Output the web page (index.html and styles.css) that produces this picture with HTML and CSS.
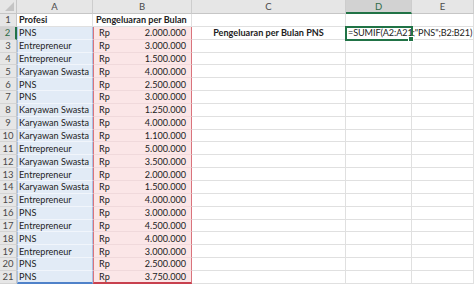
FILE: index.html
```html
<!DOCTYPE html>
<html>
<head>
<meta charset="utf-8">
<link rel="stylesheet" href="styles.css">
</head>
<body>
<div class="sheet">
  <div class="corner"><svg width="9" height="9" viewBox="0 0 9 9"><polygon points="9,0 9,9 0,9" fill="#c4c4c4"/></svg></div>
  <div class="ch">A</div><div class="ch">B</div><div class="ch">C</div><div class="ch sel">D</div><div class="ch">E</div>

  <div class="rh">1</div><div class="c b">Profesi</div><div class="c b hb">Pengeluaran per Bulan</div><div class="c"></div><div class="c"></div><div class="c"></div>

  <div class="rh sel">2</div><div class="c ra">PNS</div><div class="c rb"><span>Rp</span><span>2.000.000</span></div><div class="c b ctr">Pengeluaran per Bulan PNS</div><div class="c active">=SUMIF(A2:A21;"PNS";B2:B21)</div><div class="c e2"></div>
  <div class="rh">3</div><div class="c ra">Entrepreneur</div><div class="c rb"><span>Rp</span><span>3.000.000</span></div><div class="c"></div><div class="c"></div><div class="c"></div>
  <div class="rh">4</div><div class="c ra">Entrepreneur</div><div class="c rb"><span>Rp</span><span>1.500.000</span></div><div class="c"></div><div class="c"></div><div class="c"></div>
  <div class="rh">5</div><div class="c ra">Karyawan Swasta</div><div class="c rb"><span>Rp</span><span>4.000.000</span></div><div class="c"></div><div class="c"></div><div class="c"></div>
  <div class="rh">6</div><div class="c ra">PNS</div><div class="c rb"><span>Rp</span><span>2.500.000</span></div><div class="c"></div><div class="c"></div><div class="c"></div>
  <div class="rh">7</div><div class="c ra">PNS</div><div class="c rb"><span>Rp</span><span>3.000.000</span></div><div class="c"></div><div class="c"></div><div class="c"></div>
  <div class="rh">8</div><div class="c ra">Karyawan Swasta</div><div class="c rb"><span>Rp</span><span>1.250.000</span></div><div class="c"></div><div class="c"></div><div class="c"></div>
  <div class="rh">9</div><div class="c ra">Karyawan Swasta</div><div class="c rb"><span>Rp</span><span>4.000.000</span></div><div class="c"></div><div class="c"></div><div class="c"></div>
  <div class="rh">10</div><div class="c ra">Karyawan Swasta</div><div class="c rb"><span>Rp</span><span>1.100.000</span></div><div class="c"></div><div class="c"></div><div class="c"></div>
  <div class="rh">11</div><div class="c ra">Entrepreneur</div><div class="c rb"><span>Rp</span><span>5.000.000</span></div><div class="c"></div><div class="c"></div><div class="c"></div>
  <div class="rh">12</div><div class="c ra">Karyawan Swasta</div><div class="c rb"><span>Rp</span><span>3.500.000</span></div><div class="c"></div><div class="c"></div><div class="c"></div>
  <div class="rh">13</div><div class="c ra">Entrepreneur</div><div class="c rb"><span>Rp</span><span>2.000.000</span></div><div class="c"></div><div class="c"></div><div class="c"></div>
  <div class="rh">14</div><div class="c ra">Karyawan Swasta</div><div class="c rb"><span>Rp</span><span>1.500.000</span></div><div class="c"></div><div class="c"></div><div class="c"></div>
  <div class="rh">15</div><div class="c ra">Entrepreneur</div><div class="c rb"><span>Rp</span><span>4.000.000</span></div><div class="c"></div><div class="c"></div><div class="c"></div>
  <div class="rh">16</div><div class="c ra">PNS</div><div class="c rb"><span>Rp</span><span>3.000.000</span></div><div class="c"></div><div class="c"></div><div class="c"></div>
  <div class="rh">17</div><div class="c ra">Entrepreneur</div><div class="c rb"><span>Rp</span><span>4.500.000</span></div><div class="c"></div><div class="c"></div><div class="c"></div>
  <div class="rh">18</div><div class="c ra">PNS</div><div class="c rb"><span>Rp</span><span>4.000.000</span></div><div class="c"></div><div class="c"></div><div class="c"></div>
  <div class="rh">19</div><div class="c ra">Entrepreneur</div><div class="c rb"><span>Rp</span><span>3.000.000</span></div><div class="c"></div><div class="c"></div><div class="c"></div>
  <div class="rh">20</div><div class="c ra">PNS</div><div class="c rb"><span>Rp</span><span>2.500.000</span></div><div class="c"></div><div class="c"></div><div class="c"></div>
  <div class="rh">21</div><div class="c ra last">PNS</div><div class="c rb last"><span>Rp</span><span>3.750.000</span></div><div class="c"></div><div class="c"></div><div class="c"></div>
</div>
</body>
</html>
```
FILE: styles.css
```css
* { box-sizing: border-box; }
html, body { margin: 0; padding: 0; background: #ffffff; overflow: hidden; }
.sheet {
  display: grid;
  grid-template-columns: 17px 76px 99px 154px 66px 62px;
  grid-template-rows: 14px repeat(21, 12.857px);
  font-family: Lato, "Liberation Sans", sans-serif;
  font-size: 9.1px;
  color: #222222;
  width: 474px;
}
.corner {
  background: #e6e6e6;
  border-right: 1px solid #c6c6c6;
  border-bottom: 1px solid #c6c6c6;
  display: flex;
  align-items: flex-end;
  justify-content: flex-end;
  padding: 0 2px 2px 0;
}
.corner svg { display: block; }
.ch {
  background: #e6e6e6;
  border-right: 1px solid #cdcdcd;
  border-bottom: 1px solid #c6c6c6;
  color: #4a4a4a;
  display: flex;
  align-items: center;
  justify-content: center;
  font-size: 9.5px;
}
.ch.sel {
  background: #d2d2d2;
  color: #2f6b47;
  border-bottom: 2px solid #217346;
}
.rh {
  background: #e6e6e6;
  border-right: 1px solid #c6c6c6;
  border-bottom: 1px solid #d4d4d4;
  color: #4a4a4a;
  display: flex;
  align-items: center;
  justify-content: center;
  font-size: 9.5px;
}
.rh.sel {
  background: #d2d2d2;
  color: #2f6b47;
  border-right: 2px solid #217346;
}
.c {
  border-right: 1px solid #e0e0e0;
  border-bottom: 1px solid #e0e0e0;
  display: flex;
  align-items: center;
  padding: 0 2px;
  white-space: nowrap;
  overflow: hidden;
  line-height: 1;
}
.b { font-weight: bold; }
.hb { padding-left: 3px; }
.ctr { justify-content: center; }
.ra {
  background: #e2ebf6;
  border-left: 1px solid #a9c2e4;
  border-right: 1px solid #a9c2e4;
  border-bottom: 1px solid #f1f5fb;
  padding-left: 1px;
}
.ra.last { border-bottom: 2px solid #4f82c9; }
.rb {
  background: #fbe6e7;
  border-left: 1px solid #d9737c;
  border-right: 1px solid #d9737c;
  border-bottom: 1px solid #f0d9db;
  justify-content: space-between;
  padding: 0 5px 0 5px;
}
.rb.last { border-bottom: 2px solid #c8414e; }
.active {
  position: relative;
  z-index: 2;
  overflow: visible;
  outline: 2px solid #217346;
  outline-offset: -1px;
  padding-left: 2px;
  background: transparent;
  letter-spacing: -0.1px;
}
.active::after {
  content: "";
  position: absolute;
  right: -3px;
  bottom: -3px;
  width: 4px;
  height: 4px;
  background: #217346;
  border: 1px solid #ffffff;
}
```
